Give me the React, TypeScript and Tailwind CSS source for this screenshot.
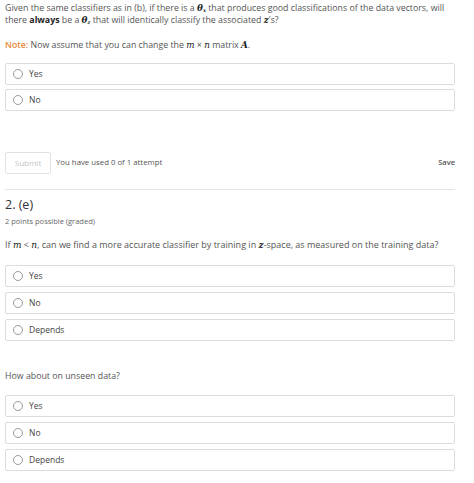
import React from "react";

const M = ({ children, bold }: { children: React.ReactNode; bold?: boolean }) => (
  <span
    className={`italic ${bold ? "font-bold" : ""} text-[#222]`}
    style={{ fontFamily: '"DejaVu Serif", "Liberation Serif", serif' }}
  >
    {children}
  </span>
);

const Option = ({ label }: { label: string }) => (
  <div className="flex h-[22px] items-center rounded-[2px] border border-[#dcdcdc] bg-white pl-[7px]">
    <span className="h-[10px] w-[10px] rounded-full border border-[#9a9a9a] bg-white" />
    <span className="ml-[6px] text-[8.5px] text-[#444]">{label}</span>
  </div>
);

export default function App() {
  return (
    <div
      className="h-[483px] w-[474px] bg-white px-[5px] text-[#555]"
      style={{ fontFamily: '"Open Sans", "Liberation Sans", sans-serif' }}
    >
      <div className="w-[450px]">
        <p className="pt-[2px] text-[8.8px] leading-[12px] text-[#555]">
          Given the same classifiers as in (b), if there is a{" "}
          <M bold>
            θ<sub className="text-[5px] leading-none">x</sub>
          </M>{" "}
          that produces good classifications of the data vectors, will there{" "}
          <b className="font-bold text-[#222]">always</b> be a{" "}
          <M bold>
            θ<sub className="text-[5px] leading-none">z</sub>
          </M>{" "}
          that will identically classify the associated <M bold>z</M>'s?
        </p>
        <p className="mt-[13px] text-[8.8px] leading-[12px]">
          <span className="font-semibold text-[#e8893a]">Note:</span> Now assume that you can change the{" "}
          <M>m</M> × <M>n</M> matrix <M bold>A</M>.
        </p>
        <div className="mt-[12px] flex flex-col gap-[4px]">
          <Option label="Yes" />
          <Option label="No" />
        </div>
        <div className="mt-[41px] flex items-center">
          <div className="flex h-[22px] w-[46px] items-center justify-center rounded-[2px] border border-[#e2e2e2] text-[8px] text-[#c4c4c4]">
            Submit
          </div>
          <span className="ml-[5px] text-[7.8px] text-[#555]">You have used 0 of 1 attempt</span>
          <span className="ml-auto text-[7.5px] font-semibold text-[#555]">Save</span>
        </div>
        <div className="mt-[15px] h-[1px] bg-[#e4e4e4]" />
        <div className="mt-[7px] text-[12.5px] leading-[16px] text-[#333]">2. (e)</div>
        <div className="mt-[3px] text-[7.5px] leading-[10px] text-[#666]">2 points possible (graded)</div>
        <p className="mt-[13px] text-[9px] leading-[12px] text-[#555]">
          If <M>m</M> &lt; <M>n</M>, can we find a more accurate classifier by training in <M bold>z</M>-space, as
          measured on the training data?
        </p>
        <div className="mt-[14px] flex flex-col gap-[5px]">
          <Option label="Yes" />
          <Option label="No" />
          <Option label="Depends" />
        </div>
        <p className="mt-[29px] text-[8.8px] leading-[12px] text-[#555]">How about on unseen data?</p>
        <div className="mt-[13px] flex flex-col gap-[5px]">
          <Option label="Yes" />
          <Option label="No" />
          <Option label="Depends" />
        </div>
      </div>
    </div>
  );
}
